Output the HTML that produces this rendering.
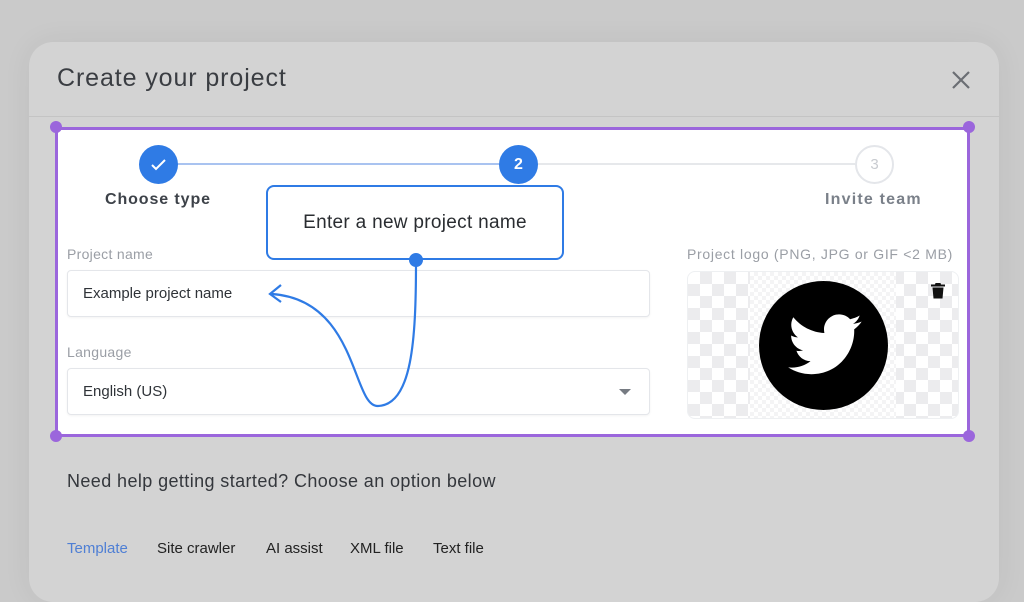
<!DOCTYPE html>
<html><head><meta charset="utf-8"><style>
*{margin:0;padding:0;box-sizing:border-box}
body{width:1024px;height:575px;overflow:hidden;background:#cacaca;font-family:"Liberation Sans",sans-serif;position:relative}
.modal{position:absolute;left:29px;top:42px;width:970px;height:560px;background:#d3d3d3;border-radius:24px;box-shadow:0 0 30px rgba(0,0,0,.06)}
.title{position:absolute;left:57px;top:64px;font-size:25px;color:#3a3d42;letter-spacing:.9px}
.hdr{position:absolute;left:29px;top:116px;width:970px;height:1px;background:#c4c4c4}
.x{position:absolute;left:950px;top:69px}
.hl{position:absolute;left:55px;top:127px;width:915px;height:310px;background:#fff;border:3px solid #9b66dc}
.dot{position:absolute;width:12px;height:12px;border-radius:50%;background:#9b66dc}
.abs{position:absolute}
.lbl{position:absolute;font-size:14px;color:#9a9ea5;letter-spacing:.3px}
.inp{position:absolute;background:#fff;border:1px solid #e4e6ea;border-radius:4px;box-shadow:0 1px 2px rgba(0,0,0,.05)}
.inp span{position:absolute;left:15px;font-size:15px;color:#2f3338}
.tab{position:absolute;top:540px;font-size:15px;color:#222}
</style></head><body>
<div class="modal"></div>
<div class="title">Create your project</div>
<div class="hdr"></div>
<svg class="x" width="22" height="22" viewBox="0 0 22 22"><path d="M3 3L19 19M19 3L3 19" stroke="#6b6e73" stroke-width="2.2"/></svg>
<div class="hl"></div>
<div class="dot" style="left:50px;top:121px"></div>
<div class="dot" style="left:963px;top:121px"></div>
<div class="dot" style="left:50px;top:430px"></div>
<div class="dot" style="left:963px;top:430px"></div>
<div class="abs" style="left:177px;top:163px;width:322px;height:2px;background:#a9c3f0"></div>
<div class="abs" style="left:537px;top:163px;width:318px;height:2px;background:#e6e8eb"></div>
<div class="abs" style="left:139px;top:145px;width:39px;height:39px;border-radius:50%;background:#2f7be5"></div>
<svg class="abs" style="left:148px;top:154px" width="21" height="21" viewBox="0 0 21 21"><path d="M4 11l4 4 9-9" stroke="#fff" stroke-width="2" fill="none"/></svg>
<div class="abs" style="left:499px;top:145px;width:39px;height:39px;border-radius:50%;background:#2f7be5;color:#fff;font-weight:bold;font-size:16px;text-align:center;line-height:39px">2</div>
<div class="abs" style="left:855px;top:145px;width:39px;height:39px;border-radius:50%;background:#fff;border:2px solid #e4e6ea;color:#c8cbd0;font-size:15px;text-align:center;line-height:35px">3</div>
<div class="abs" style="left:105px;top:191px;font-size:16px;font-weight:bold;color:#3d4249;letter-spacing:.9px">Choose type</div>
<div class="abs" style="left:825px;top:191px;font-size:16px;font-weight:bold;color:#7a8089;letter-spacing:1.2px">Invite team</div>
<div class="lbl" style="left:67px;top:246px">Project name</div>
<div class="inp" style="left:67px;top:270px;width:583px;height:47px"><span style="top:14px">Example project name</span></div>
<div class="lbl" style="left:67px;top:344px">Language</div>
<div class="inp" style="left:67px;top:368px;width:583px;height:47px"><span style="top:14px">English (US)</span></div>
<div class="abs" style="left:619px;top:389px;width:0;height:0;border-left:6px solid transparent;border-right:6px solid transparent;border-top:6px solid #767b82"></div>
<div class="lbl" style="left:687px;top:246px;letter-spacing:.7px">Project logo (PNG, JPG or GIF &lt;2 MB)</div>
<div class="abs" style="left:687px;top:271px;width:272px;height:148px;border:1px solid #eef0f2;border-radius:8px;overflow:hidden;background-color:#fff;background-image:conic-gradient(#ececee 25%,#fff 0 50%,#ececee 0 75%,#fff 0);background-size:24px 24px"></div>
<div class="abs" style="left:750px;top:272px;width:146px;height:146px;background-image:conic-gradient(#f4f4f5 25%,#fff 0 50%,#f4f4f5 0 75%,#fff 0);background-size:8px 8px"></div>
<div class="abs" style="left:759px;top:281px;width:129px;height:129px;border-radius:50%;background:#000"></div>
<svg class="abs" style="left:784px;top:312px" width="80" height="68" viewBox="0 0 24 21"><path fill="#fff" d="M23.643 2.937c-.835.37-1.732.62-2.675.733.962-.576 1.7-1.49 2.048-2.578-.9.534-1.897.922-2.958 1.13-.85-.904-2.06-1.47-3.4-1.47-2.572 0-4.658 2.086-4.658 4.66 0 .364.042.718.12 1.06-3.873-.195-7.304-2.05-9.602-4.868-.4.69-.63 1.49-.63 2.342 0 1.616.823 3.043 2.072 3.878-.764-.025-1.482-.234-2.11-.583v.06c0 2.257 1.605 4.14 3.737 4.568-.392.106-.803.162-1.227.162-.3 0-.593-.028-.877-.082.593 1.85 2.313 3.198 4.352 3.234-1.595 1.25-3.604 1.995-5.786 1.995-.376 0-.747-.022-1.112-.065 2.062 1.323 4.51 2.093 7.14 2.093 8.57 0 13.255-7.098 13.255-13.254 0-.2-.005-.402-.014-.602.91-.658 1.7-1.477 2.323-2.41z"/></svg>
<svg class="abs" style="left:930px;top:282px" width="16" height="17" viewBox="0 0 16 17"><path d="M5.5 1h5l.5 1.5H15v2H1v-2h4z M2.5 5.5h11l-1 11h-9z" fill="#111"/></svg>
<div class="abs" style="left:266px;top:185px;width:298px;height:75px;background:#fff;border:2.5px solid #2f7be5;border-radius:8px;font-size:19px;color:#2a2d31;text-align:center;line-height:72px;letter-spacing:.3px">Enter a new project name</div>
<svg class="abs" style="left:0;top:0" width="1024" height="575"><path d="M416 262 C416 340 412 405 378 406 C352 407 358 300 272 294" stroke="#2f7be5" stroke-width="2.2" fill="none"/><path d="M281 285 L270 294 L281 302" stroke="#2f7be5" stroke-width="2.2" fill="none"/><circle cx="416" cy="260" r="7" fill="#2f7be5"/></svg>
<div class="abs" style="left:67px;top:471px;font-size:18px;color:#34373c;letter-spacing:.4px">Need help getting started? Choose an option below</div>
<div class="tab" style="left:67px;color:#4f7fd4">Template</div>
<div class="tab" style="left:157px">Site crawler</div>
<div class="tab" style="left:266px">AI assist</div>
<div class="tab" style="left:350px">XML file</div>
<div class="tab" style="left:433px">Text file</div>
</body></html>
